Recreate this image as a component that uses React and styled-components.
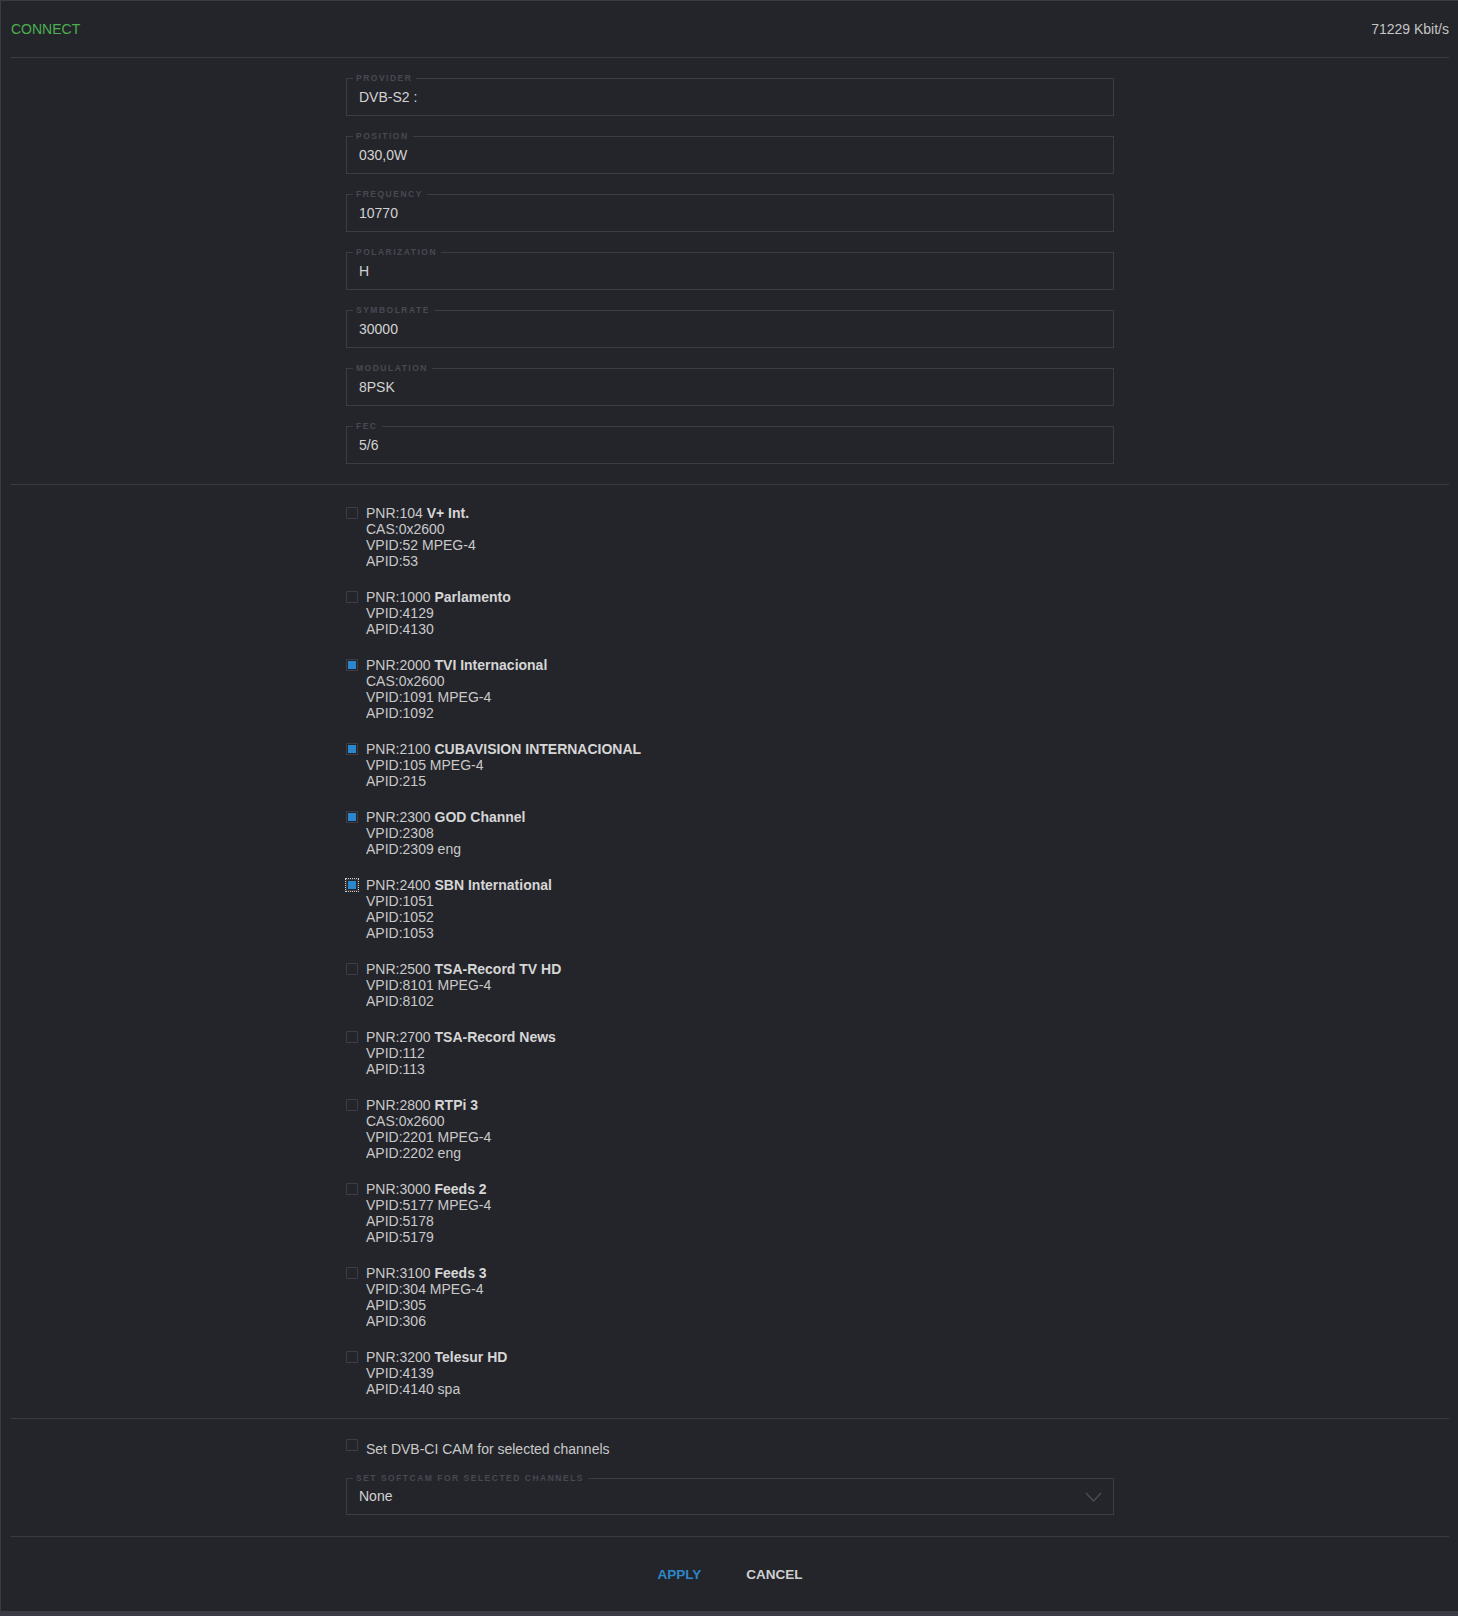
import React from "react";
import styled, { createGlobalStyle } from "styled-components";

const GlobalStyle = createGlobalStyle`
  html, body {
    margin: 0;
    padding: 0;
    background: #3a3b45;
  }
  body {
    font-family: "Liberation Sans", Arial, Helvetica, sans-serif;
    -webkit-font-smoothing: antialiased;
  }
`;

const Panel = styled.div`
  margin: 1px 0 0 1px;
  background: #24252b;
  padding: 0 9px 0 10px;
  color: #c9c9c9;
  font-size: 14px;
`;

const Header = styled.div`
  height: 56px;
  display: flex;
  align-items: center;
  justify-content: space-between;
  border-bottom: 1px solid #393a42;
`;

const Status = styled.span`
  color: #4cb050;
  font-size: 14px;
`;

const Rate = styled.span`
  color: #c4c4c4;
  font-size: 14px;
`;

const Section = styled.div`
  padding: ${(p) => p.$pad};
  border-bottom: 1px solid #393a42;
`;

const Inner = styled.div`
  width: 768px;
  margin: 0 auto;
  display: flex;
  flex-direction: column;
  gap: ${(p) => p.$gap || 0}px;
`;

const Field = styled.fieldset`
  margin: 0;
  padding: 0 6px;
  border: 1px solid #3b3c45;
  min-width: 0;
`;

const Legend = styled.legend`
  padding: 0 4px 0 3px;
  font-size: 8.5px;
  line-height: 9px;
  font-weight: 700;
  letter-spacing: 1.5px;
  text-transform: uppercase;
  color: #474952;
`;

const Value = styled.div`
  padding: ${(p) => (p.$compact ? "5px 0 10px 6px" : "6px 6px 10px")};
  line-height: 16px;
  font-size: 14px;
  color: #d2d2d2;
  display: flex;
  align-items: center;
  justify-content: space-between;
`;

const Chevron = styled.svg`
  width: 17px;
  height: 10px;
  margin-right: 5px;
  margin-top: 2px;
`;

const Item = styled.div`
  display: flex;
  align-items: flex-start;
  gap: 8px;
`;

const Box = styled.span`
  flex: none;
  width: 12px;
  height: 12px;
  box-sizing: border-box;
  border: 1px solid #3b3c45;
  padding: 1px;
  margin-top: ${(p) => p.$top}px;
  outline: ${(p) => (p.$focus ? "1px dotted #d0d0d0" : "none")};
  outline-offset: 0;
  display: flex;

  &::after {
    content: "";
    flex: 1;
    background: ${(p) => (p.$checked ? "#2b87cc" : "transparent")};
  }
`;

const Lines = styled.div`
  line-height: 16px;
  font-size: 14px;
  color: #c9c9c9;
  margin-top: ${(p) => p.$top || 0}px;
`;

const Name = styled.b`
  font-weight: 700;
  color: #d6d6d6;
`;

const Footer = styled.div`
  height: 74px;
  display: flex;
  align-items: center;
  justify-content: center;
  gap: 13px;
`;

const Button = styled.button`
  background: none;
  border: none;
  padding: 8px 16px;
  font-family: inherit;
  font-size: 13.5px;
  font-weight: 700;
  cursor: pointer;
  color: ${(p) => (p.$primary ? "#2e87c9" : "#cfcfcf")};
`;

const fields = [
  ["Provider", "DVB-S2 :"],
  ["Position", "030,0W"],
  ["Frequency", "10770"],
  ["Polarization", "H"],
  ["Symbolrate", "30000"],
  ["Modulation", "8PSK"],
  ["FEC", "5/6"],
];

const channels = [
  { pnr: 104, name: "V+ Int.", lines: ["CAS:0x2600", "VPID:52 MPEG-4", "APID:53"] },
  { pnr: 1000, name: "Parlamento", lines: ["VPID:4129", "APID:4130"] },
  { pnr: 2000, name: "TVI Internacional", checked: true, lines: ["CAS:0x2600", "VPID:1091 MPEG-4", "APID:1092"] },
  { pnr: 2100, name: "CUBAVISION INTERNACIONAL", checked: true, lines: ["VPID:105 MPEG-4", "APID:215"] },
  { pnr: 2300, name: "GOD Channel", checked: true, lines: ["VPID:2308", "APID:2309 eng"] },
  { pnr: 2400, name: "SBN International", checked: true, focus: true, lines: ["VPID:1051", "APID:1052", "APID:1053"] },
  { pnr: 2500, name: "TSA-Record TV HD", lines: ["VPID:8101 MPEG-4", "APID:8102"] },
  { pnr: 2700, name: "TSA-Record News", lines: ["VPID:112", "APID:113"] },
  { pnr: 2800, name: "RTPi 3", lines: ["CAS:0x2600", "VPID:2201 MPEG-4", "APID:2202 eng"] },
  { pnr: 3000, name: "Feeds 2", lines: ["VPID:5177 MPEG-4", "APID:5178", "APID:5179"] },
  { pnr: 3100, name: "Feeds 3", lines: ["VPID:304 MPEG-4", "APID:305", "APID:306"] },
  { pnr: 3200, name: "Telesur HD", lines: ["VPID:4139", "APID:4140 spa"] },
];

export default function App() {
  return (
    <>
      <GlobalStyle />
      <Panel>
        <Header>
          <Status>CONNECT</Status>
          <Rate>71229 Kbit/s</Rate>
        </Header>

        <Section $pad="16px 0 20px">
          <Inner $gap={16}>
            {fields.map(([label, value]) => (
              <Field key={label}>
                <Legend>{label}</Legend>
                <Value>{value}</Value>
              </Field>
            ))}
          </Inner>
        </Section>

        <Section $pad="20px 0 21px">
          <Inner $gap={20}>
            {channels.map((c) => (
              <Item key={c.pnr}>
                <Box $top={2} $checked={c.checked} $focus={c.focus} />
                <Lines>
                  <div>
                    PNR:{c.pnr} <Name>{c.name}</Name>
                  </div>
                  {c.lines.map((l) => (
                    <div key={l}>{l}</div>
                  ))}
                </Lines>
              </Item>
            ))}
          </Inner>
        </Section>

        <Section $pad="20px 0 21px">
          <Inner $gap={17}>
            <Item>
              <Box $top={0} />
              <Lines $top={2}>Set DVB-CI CAM for selected channels</Lines>
            </Item>
            <Field>
              <Legend>Set softcam for selected channels</Legend>
              <Value $compact>
                <span>None</span>
                <Chevron viewBox="0 0 17 10">
                  <polyline points="1,1 8.5,9 16,1" fill="none" stroke="#4b4d56" strokeWidth="1.4" />
                </Chevron>
              </Value>
            </Field>
          </Inner>
        </Section>

        <Footer>
          <Button $primary>APPLY</Button>
          <Button>CANCEL</Button>
        </Footer>
      </Panel>
    </>
  );
}
